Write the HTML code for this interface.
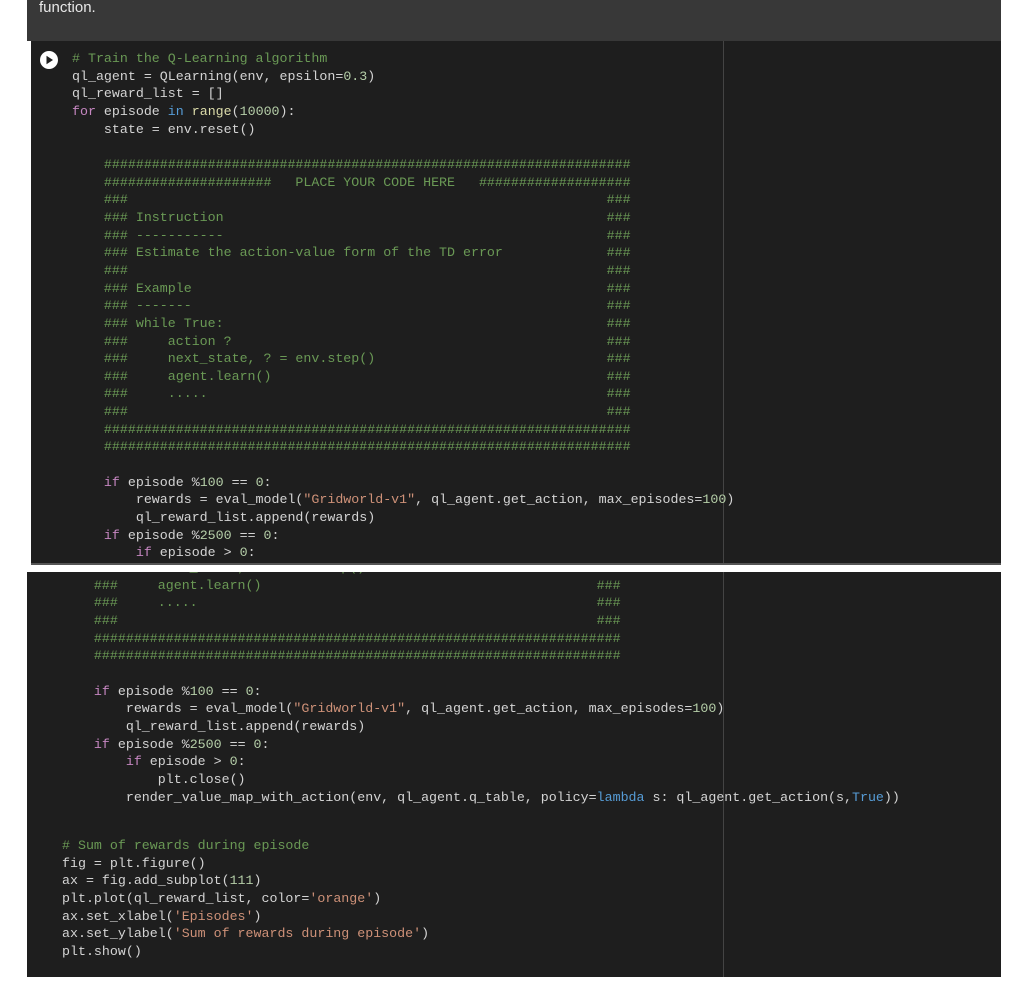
<!DOCTYPE html>
<html><head><meta charset="utf-8"><style>
body{margin:0;width:1024px;height:1007px;background:#fff;position:relative;overflow:hidden;font-family:"Liberation Mono",monospace}
.hdr{position:absolute;left:27px;top:0;width:974px;height:41px;background:#383838}
.hdr span{position:absolute;left:12px;top:-1px;color:#e8e8e8;font:15px "Liberation Sans",sans-serif}
.cell{position:absolute;background:#1e1e1e;overflow:hidden}
pre{position:absolute;margin:0;font:13.3px/17.65px "Liberation Mono",monospace;color:#d4d4d4;white-space:pre}
.c{color:#6a9955}.k{color:#c586c0}.b{color:#569cd6}.f{color:#dcdcaa}.n{color:#b5cea8}.s{color:#ce9178}
.rule{position:absolute;width:1px;background:#444}
</style></head><body>
<div class="hdr"><span>function.</span></div>
<div class="cell" style="left:31px;top:41px;width:970px;height:522px;border-bottom:2px solid #555">
<div class="rule" style="left:692px;top:0;height:522px"></div>
<svg style="position:absolute;left:8px;top:9px" width="20" height="20"><circle cx="10" cy="10" r="9" fill="#fff"/><path d="M7.5 5.8 L14 10 L7.5 14.2Z" fill="#1e1e1e"/></svg>
<pre style="left:41px;top:9px"><span class="c"># Train the Q-Learning algorithm</span>
ql_agent = QLearning(env, epsilon=<span class="n">0.3</span>)
ql_reward_list = []
<span class="k">for</span> episode <span class="b">in</span> <span class="f">range</span>(<span class="n">10000</span>):
    state = env.reset()

<span class="c">    ##################################################################
    #####################   PLACE YOUR CODE HERE   ###################
    ###                                                            ###
    ### Instruction                                                ###
    ### -----------                                                ###
    ### Estimate the action-value form of the TD error             ###
    ###                                                            ###
    ### Example                                                    ###
    ### -------                                                    ###
    ### while True:                                                ###
    ###     action ?                                               ###
    ###     next_state, ? = env.step()                             ###
    ###     agent.learn()                                          ###
    ###     .....                                                  ###
    ###                                                            ###
    ##################################################################
    ##################################################################</span>

    <span class="k">if</span> episode %<span class="n">100</span> == <span class="n">0</span>:
        rewards = eval_model(<span class="s">"Gridworld-v1"</span>, ql_agent.get_action, max_episodes=<span class="n">100</span>)
        ql_reward_list.append(rewards)
    <span class="k">if</span> episode %<span class="n">2500</span> == <span class="n">0</span>:
        <span class="k">if</span> episode > <span class="n">0</span>:</pre>
</div>
<div class="cell" style="left:27px;top:572px;width:974px;height:405px">
<div class="rule" style="left:696px;top:0;height:405px"></div>
<pre style="left:35px;top:-13px"><span class="c">    ###     next_state, ? = env.step()                             ###
    ###     agent.learn()                                          ###
    ###     .....                                                  ###
    ###                                                            ###
    ##################################################################
    ##################################################################</span>

    <span class="k">if</span> episode %<span class="n">100</span> == <span class="n">0</span>:
        rewards = eval_model(<span class="s">"Gridworld-v1"</span>, ql_agent.get_action, max_episodes=<span class="n">100</span>)
        ql_reward_list.append(rewards)
    <span class="k">if</span> episode %<span class="n">2500</span> == <span class="n">0</span>:
        <span class="k">if</span> episode > <span class="n">0</span>:
            plt.close()
        render_value_map_with_action(env, ql_agent.q_table, policy=<span class="b">lambda</span> s: ql_agent.get_action(s,<span class="b">True</span>))</pre>
<pre style="left:35px;top:265px"><span class="c"># Sum of rewards during episode</span>
fig = plt.figure()
ax = fig.add_subplot(<span class="n">111</span>)
plt.plot(ql_reward_list, color=<span class="s">'orange'</span>)
ax.set_xlabel(<span class="s">'Episodes'</span>)
ax.set_ylabel(<span class="s">'Sum of rewards during episode'</span>)
plt.show()</pre>
</div>
</body></html>
